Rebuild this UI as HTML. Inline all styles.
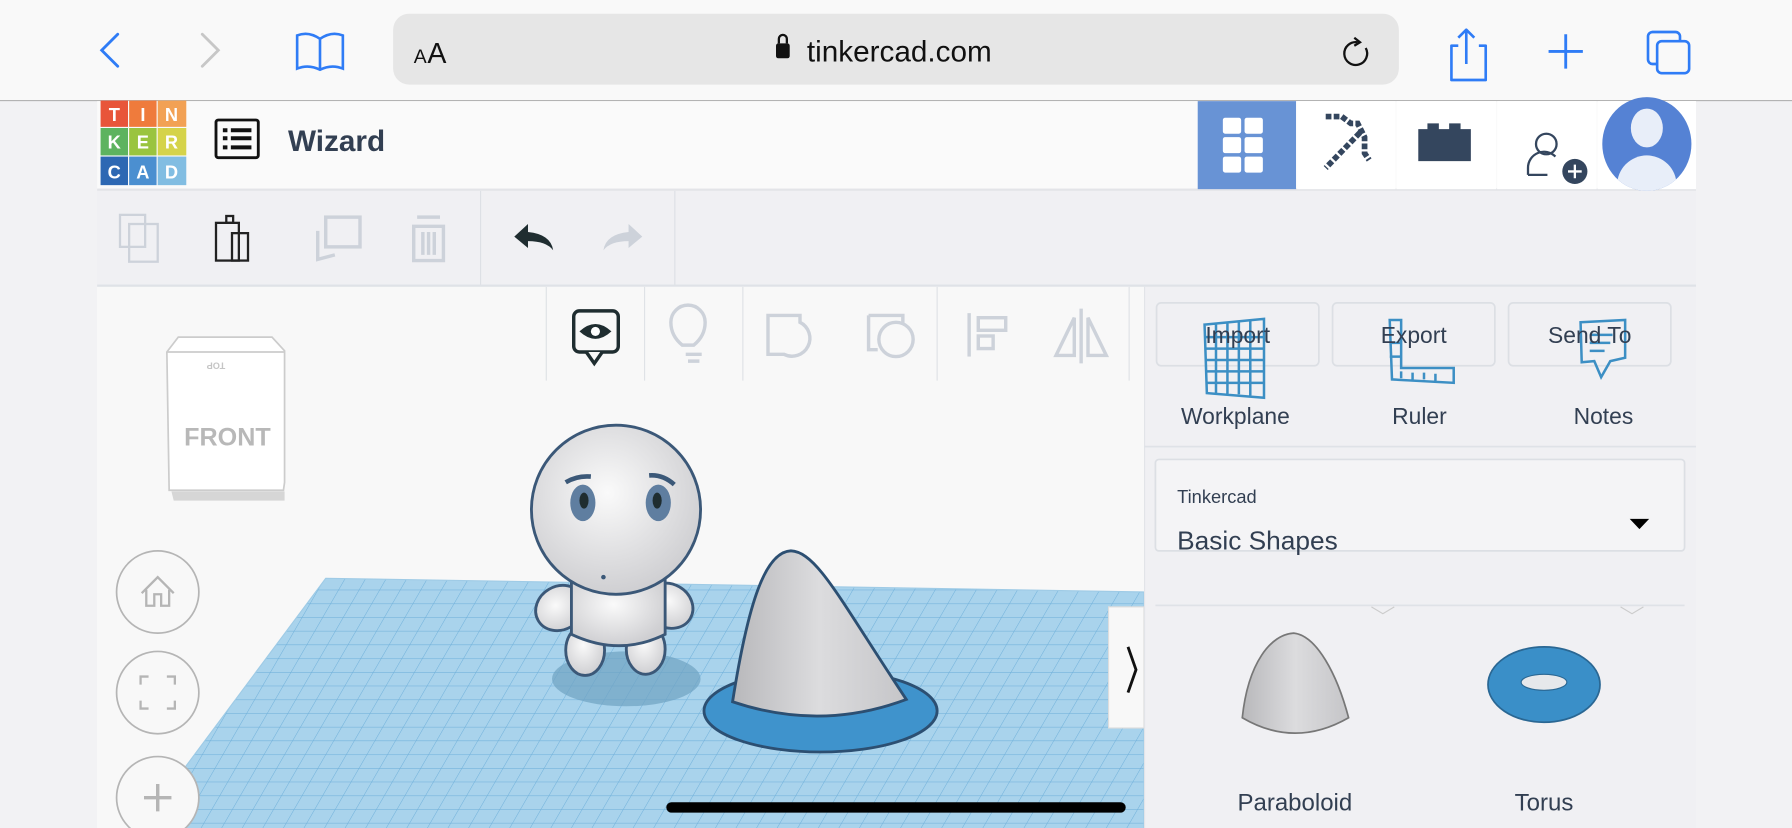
<!DOCTYPE html>
<html><head><meta charset="utf-8"><style>
html,body{margin:0;padding:0;width:1792px;height:828px;overflow:hidden;background:#f2f2f4}
svg{display:block}
text{font-family:"Liberation Sans",sans-serif}
</style></head><body>
<svg width="1792" height="828" viewBox="0 0 1568 724.5" xmlns="http://www.w3.org/2000/svg">
<defs>
<pattern id="g" width="18" height="12" patternUnits="userSpaceOnUse" patternTransform="skewX(-30)">
<rect width="18" height="12" fill="#a9d3ec"/>
<path d="M0 0H18M0 0V12" stroke="#6fb0da" stroke-width="1"/>
</pattern>
<radialGradient id="hd" cx="0.45" cy="0.4" r="0.6"><stop offset="0" stop-color="#fafafa"/><stop offset="1" stop-color="#cfcfd2"/></radialGradient>
<linearGradient id="pb" x1="0" x2="1"><stop offset="0" stop-color="#b8b8bb"/><stop offset="0.5" stop-color="#dcdcde"/><stop offset="1" stop-color="#c5c5c8"/></linearGradient>
</defs>
<rect x="0" y="0" width="1568" height="88" fill="#f9f9f9"/>
<rect x="0" y="87.5" width="1568" height="1" fill="#b3b3b3"/>
<path d="M103 30L89 44L103 58" fill="none" stroke="#2f7cf6" stroke-width="2.5" stroke-linecap="round"/>
<path d="M177 30L191 44L177 58" fill="none" stroke="#c7c7c7" stroke-width="2.5" stroke-linecap="round"/>
<path d="M260 31Q270 27 280 34Q290 27 300 31V60Q290 56 280 61Q270 56 260 60Z M280 34V61" fill="none" stroke="#2f7cf6" stroke-width="2.3"/>
<rect x="344" y="12" width="880" height="62" rx="14" fill="#e6e6e6"/>
<text x="362" y="55" font-size="17" fill="#111">A</text><text x="374" y="55" font-size="25" fill="#111">A</text>
<rect x="679" y="38" width="12" height="13" rx="2" fill="#111"/><path d="M681.5 38V34a3.5 3.5 0 0 1 7 0V38" fill="none" stroke="#111" stroke-width="2"/>
<text x="706" y="54" font-size="26" fill="#111">tinkercad.com</text>
<path d="M1188 37a10 10 0 1 0 7 5" fill="none" stroke="#111" stroke-width="2"/><path d="M1185 33l5 4-5 3" fill="none" stroke="#111" stroke-width="2"/>
<path d="M1276 40h-6v30h30v-30h-6M1283 26v30M1276 33l7-7 7 7" fill="none" stroke="#2f7cf6" stroke-width="2.3" stroke-linejoin="round"/>
<path d="M1370 30v30M1355 45h30" stroke="#2f7cf6" stroke-width="2.5"/>
<rect x="1442" y="28" width="28" height="28" rx="4" fill="none" stroke="#2f7cf6" stroke-width="2.3"/>
<rect x="1450" y="36" width="28" height="28" rx="4" fill="#f9f9f9" stroke="#2f7cf6" stroke-width="2.3"/>
<rect x="85" y="88.5" width="1399" height="77" fill="#fafafa"/>
<rect x="85" y="165" width="1399" height="2" fill="#e3e4e8"/>
<g font-size="16" font-weight="bold" fill="#fff" text-anchor="middle">
<rect x="88" y="88" width="24" height="23" fill="#e8553a"/><text x="100" y="106">T</text>
<rect x="113" y="88" width="24" height="23" fill="#ef7b3c"/><text x="125" y="106">I</text>
<rect x="138" y="88" width="25" height="23" fill="#f2a154"/><text x="150" y="106">N</text>
<rect x="88" y="112" width="24" height="24" fill="#5db35f"/><text x="100" y="130">K</text>
<rect x="113" y="112" width="24" height="24" fill="#9ac43f"/><text x="125" y="130">E</text>
<rect x="138" y="112" width="25" height="24" fill="#d5d34a"/><text x="150" y="130">R</text>
<rect x="88" y="137" width="24" height="25" fill="#2d68b3"/><text x="100" y="156">C</text>
<rect x="113" y="137" width="24" height="25" fill="#4b8fd0"/><text x="125" y="156">A</text>
<rect x="138" y="137" width="25" height="25" fill="#81bde2"/><text x="150" y="156">D</text>
</g>
<rect x="189" y="105" width="37" height="33" rx="2" fill="none" stroke="#111" stroke-width="2.5"/>
<path d="M195 114h4M202 114h18M195 121h4M202 121h18M195 129h4M202 129h18" stroke="#111" stroke-width="3.5"/>
<text x="252" y="132" font-size="26" font-weight="bold" fill="#323f52">Wizard</text>
<rect x="1048" y="88.5" width="86" height="77" fill="#6893d5"/>
<g fill="#fff"><rect x="1070" y="103" width="16" height="14" rx="2"/><rect x="1089" y="103" width="16" height="14" rx="2"/>
<rect x="1070" y="120" width="16" height="14" rx="2"/><rect x="1089" y="120" width="16" height="14" rx="2"/>
<rect x="1070" y="137" width="16" height="14" rx="2"/><rect x="1089" y="137" width="16" height="14" rx="2"/></g>
<rect x="1135" y="88.5" width="86" height="77" fill="#fff"/><rect x="1222" y="88.5" width="87" height="77" fill="#fff"/><rect x="1310" y="88.5" width="87" height="77" fill="#fff"/><rect x="1398" y="88.5" width="86" height="77" fill="#fff"/>
<path d="M1160 102h14l8 6 6 0 6 12 0 14 4 6M1190 116L1160 147" fill="none" stroke="#34465e" stroke-width="5" stroke-dasharray="5 2"/>
<path d="M1241 113h8v-5h10v5h9v-5h10v5h9v28h-46z" fill="#34465e"/>
<circle cx="1353" cy="126" r="9" fill="none" stroke="#34465e" stroke-width="2"/>
<path d="M1337 153v-6a14 14 0 0 1 24-10M1337 153h17" fill="none" stroke="#34465e" stroke-width="2"/>
<circle cx="1378" cy="150" r="11" fill="#34465e"/><path d="M1378 144v12M1372 150h12" stroke="#fff" stroke-width="2"/>
<clipPath id="av"><ellipse cx="1441" cy="126" rx="39" ry="41"/></clipPath>
<ellipse cx="1441" cy="126" rx="39" ry="41" fill="#5582d4"/>
<g clip-path="url(#av)" fill="#e8eef9"><ellipse cx="1441" cy="112" rx="14" ry="17"/><ellipse cx="1441" cy="162" rx="26" ry="26"/></g>
<rect x="85" y="167" width="1399" height="83" fill="#f0f0f3"/>
<rect x="420" y="167" width="1" height="83" fill="#dde0e5"/><rect x="590" y="167" width="1" height="83" fill="#dde0e5"/>
<rect x="85" y="249" width="1399" height="2" fill="#dfe2e7"/>
<g fill="none" stroke="#cdd2da" stroke-width="2"><rect x="105" y="188" width="22" height="28"/><rect x="113" y="196" width="25" height="33"/></g>
<g fill="none" stroke="#222" stroke-width="2"><rect x="189" y="195" width="20" height="33"/><rect x="203" y="204" width="14" height="24"/><rect x="198" y="189" width="6" height="6"/></g>
<g fill="none" stroke="#cdd2da" stroke-width="3"><rect x="285" y="190" width="30" height="26"/><path d="M278 202v25l15-4"/><path d="M365 190h20M362 198h26v30h-26zM370 203v20M375 203v20M380 203v20"/></g>
<path d="M462 196l-12 11 12 10v-6q16 0 22 8q-2-14-22-16z" fill="#1f2d30"/>
<path d="M550 196l12 11-12 10v-6q-16 0-22 8q2-14 22-16z" fill="#cdd2da"/>
<rect x="85" y="251" width="916" height="474" fill="#f8f8f8"/>
<polygon points="285,506 1001,518 1001,725 122,725" fill="url(#g)"/>
<polygon points="285,506 1001,518 1001,725 122,725" fill="none" stroke="#9fcbe6" stroke-width="1"/>
<g fill="#f8f8f8"><rect x="478" y="251" width="510" height="82"/></g>
<g stroke="#dfe2e6" stroke-width="1"><path d="M478 251v82M564 251v82M650 251v82M820 251v82M988 251v82"/></g>
<rect x="502" y="272" width="39" height="36" rx="5" fill="none" stroke="#1f2d30" stroke-width="3"/>
<path d="M513 308l7 10 7-10" fill="#f8f8f8" stroke="#1f2d30" stroke-width="3"/>
<path d="M507 290q14-13 28 0q-14 13-28 0z" fill="#1f2d30"/><circle cx="521" cy="290" r="4" fill="#fff"/>
<g fill="none" stroke="#cdd2da" stroke-width="3">
<path d="M597 302q-10-8-10-20a15 15 0 0 1 30 0q0 12-10 20zM600 310h14M602 316h10"/>
<path d="M672 276h28v6a14 14 0 1 1-14 28h-14z"/>
<path d="M760 276h30v8M760 276v30h8"/><circle cx="784" cy="297" r="15"/>
<path d="M848 274v38"/><rect x="856" y="278" width="24" height="11"/><rect x="856" y="294" width="13" height="11"/>
<path d="M946 270v48M940 278l-16 33h16zM952 278l16 33h-16z"/>
</g>
<path d="M146 308l10-13h82l11 12v115l-1 7h-100z" fill="#fff" stroke="#ccc" stroke-width="1.5"/>
<path d="M146 308h103" stroke="#ccc" stroke-width="1.5"/>
<path d="M150 430h99v8h-97z" fill="#d6d6d6"/>
<text x="199" y="390" font-size="22" font-weight="bold" fill="#b8b8b8" text-anchor="middle">FRONT</text>
<text x="189" y="323" font-size="8" font-weight="bold" fill="#c5c5c5" text-anchor="middle" transform="rotate(180 189 320)">TOP</text>
<g fill="#f8f8f8" stroke="#b5b5b5" stroke-width="1.5">
<circle cx="138" cy="518" r="36"/><circle cx="138" cy="606" r="36"/><circle cx="138" cy="698" r="36"/></g>
<path d="M124 519l14-14 14 14M128 516v14h7v-10h6v10h7v-14" fill="none" stroke="#b5b5b5" stroke-width="2"/>
<path d="M123 599v-7h7M146 592h7v7M123 613v7h7M146 620h7v-7" fill="none" stroke="#b5b5b5" stroke-width="2"/>
<path d="M138 686v24M126 698h24" stroke="#b5b5b5" stroke-width="3"/>
<ellipse cx="548" cy="594" rx="65" ry="24" fill="#6fa2c2" opacity="0.7"/>
<g stroke="#3b5878" stroke-width="2.5" fill="url(#hd)">
<ellipse cx="512" cy="569" rx="17" ry="22"/><ellipse cx="565" cy="568" rx="17" ry="22"/>
<ellipse cx="490" cy="532" rx="22" ry="19" transform="rotate(-30 490 532)"/>
<ellipse cx="585" cy="530" rx="22" ry="19" transform="rotate(30 585 530)"/>
<path d="M500 505h82v50q-40 20-82 0z"/>
<circle cx="539" cy="446" r="74"/>
</g>
<g fill="#5f7ea0"><ellipse cx="510" cy="440" rx="11" ry="16"/><ellipse cx="576" cy="440" rx="11" ry="16"/></g>
<g fill="#1f2d30"><ellipse cx="511" cy="438" rx="4" ry="7"/><ellipse cx="575" cy="438" rx="4" ry="7"/></g>
<path d="M495 422q10-6 22-5M568 416q12-1 22 8" stroke="#3b5878" stroke-width="4" fill="none"/>
<circle cx="528" cy="505" r="2" fill="#3b5878"/>
<ellipse cx="718" cy="622" rx="102" ry="36" fill="#3f93cc" stroke="#2c4f72" stroke-width="2.5"/>
<path d="M641 614C655 525 670 483 692 482C715 483 735 525 793 612Q718 640 641 614z" fill="url(#pb)" stroke="#2c4f72" stroke-width="2.5"/>
<rect x="583" y="702" width="402" height="9" rx="4.5" fill="#000"/>
<rect x="970" y="531" width="31" height="106" fill="#f8f8f8" stroke="#ddd"/>
<path d="M987 566l7 20-7 20" fill="none" stroke="#111" stroke-width="2.5"/>
<rect x="1001" y="251" width="483" height="474" fill="#f0f0f3"/>
<rect x="1001" y="251" width="1" height="474" fill="#e2e4e8"/>
<g fill="none" stroke="#dcdfe4" stroke-width="1.5">
<rect x="1012" y="265" width="142" height="55" rx="4"/><rect x="1166" y="265" width="142" height="55" rx="4"/><rect x="1320" y="265" width="142" height="55" rx="4"/></g>
<g fill="none" stroke="#3c8fc4" stroke-width="2.2">
<path d="M1054 284l52-5v69l-50-4z M1064 283v62M1074 282v63M1084 281v64M1094 280v66M1055 295h51M1055 305h51M1055 315h51M1055 325h51M1056 335h50"/>
<path d="M1216 280h10v42h46v13l-54-3z M1226 325v6M1236 326v6M1246 326v6M1256 327v6M1216 300h10M1216 312h10"/>
<path d="M1383 282l39-2v33l-13 3-8 14-6-14-11 1zM1391 293h20M1391 300h18M1391 307h13"/>
</g>
<g font-size="20" fill="#323f52" text-anchor="middle">
<text x="1083" y="300">Import</text><text x="1237" y="300">Export</text><text x="1391" y="300">Send To</text>
<text x="1081" y="371">Workplane</text><text x="1242" y="371">Ruler</text><text x="1403" y="371">Notes</text></g>
<rect x="1001" y="390" width="483" height="1.5" fill="#dfe2e7"/>
<rect x="1011" y="402" width="463" height="80" rx="3" fill="#f4f4f6" stroke="#dcdfe4" stroke-width="1.5"/>
<text x="1030" y="440" font-size="16" fill="#323f52">Tinkercad</text>
<text x="1030" y="481" font-size="23" fill="#323f52">Basic Shapes</text>
<path d="M1426 454h17l-8.5 9z" fill="#000"/>
<rect x="1011" y="529" width="463" height="1.5" fill="#dfe2e7"/>
<path d="M1200 531l10 6 10-6M1418 531l10 6 10-6" fill="none" stroke="#ccc"/>
<path d="M1087 628C1092 580 1112 555 1132 554C1152 556 1170 590 1180 628Q1133 655 1087 628z" fill="url(#pb)" stroke="#777" stroke-width="1.5"/>
<ellipse cx="1351" cy="599" rx="49" ry="33" fill="#3a8fc8" stroke="#2a6793" stroke-width="1.5"/>
<ellipse cx="1351" cy="597" rx="20" ry="7" fill="#e6e8eb" stroke="#2a6793"/>
<g font-size="21" fill="#323f52" text-anchor="middle"><text x="1133" y="709">Paraboloid</text><text x="1351" y="709">Torus</text></g>
</svg>
</body></html>
